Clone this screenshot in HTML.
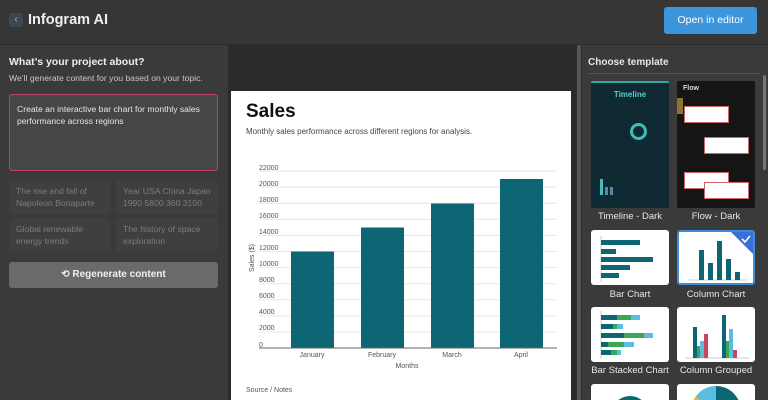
<!DOCTYPE html>
<html><head><meta charset="utf-8"><style>
*{margin:0;padding:0;box-sizing:border-box}
html,body{width:768px;height:400px;overflow:hidden}
body{background:#2b2b2b;font-family:"Liberation Sans",sans-serif;position:relative}
.a{position:absolute}
.hdr{left:0;top:0;width:768px;height:44px;background:#363636}
.left{left:0;top:45px;width:228px;height:355px;background:#3b3a3a}
.right{left:582px;top:45px;width:186px;height:355px;background:#3b3a3a}
.sug{background:#403f3f;border-radius:3px;color:#7d7c7c;font-size:8.6px;line-height:12px;padding:5px 7px;overflow:hidden}
.th{background:#fff;border-radius:3px;overflow:hidden}
.lbl{color:#e6e6e6;font-size:9.5px;text-align:center;width:86px}
</style></head><body>
<div class="a hdr"></div>
<div class="a" style="left:9px;top:13px;width:14px;height:14px;border-radius:3px;background:#3f4750;color:#9ac;font-size:10px;line-height:14px;text-align:center">‹</div>
<div class="a" style="left:28px;top:12px;color:#f0f0f0;font-size:14.5px;font-weight:bold">Infogram AI</div>
<div class="a" style="left:664px;top:7px;width:93px;height:27px;background:#3d95db;border-radius:3px;color:#fff;font-size:10.5px;line-height:27px;text-align:center">Open in editor</div>
<div class="a left"></div>
<div class="a" style="left:9px;top:56px;color:#eee;font-size:10.5px;font-weight:bold">What’s your project about?</div>
<div class="a" style="left:9px;top:73px;color:#c8c8c8;font-size:8.6px">We’ll generate content for you based on your topic.</div>
<div class="a" style="left:9px;top:94px;width:209px;height:77px;border:1.5px solid #c2406e;border-radius:3px;background:#474646;color:#e6e6e6;font-size:8.6px;line-height:12px;padding:8px 7px">Create an interactive bar chart for monthly sales performance across regions</div>
<div class="a sug" style="left:9px;top:180px;width:102px;height:34px">The rise and fall of Napoleon Bonaparte</div>
<div class="a sug" style="left:116px;top:180px;width:102px;height:34px">Year USA China Japan 1990 5800 360 3100</div>
<div class="a sug" style="left:9px;top:218px;width:102px;height:34px">Global renewable energy trends</div>
<div class="a sug" style="left:116px;top:218px;width:102px;height:34px">The history of space exploration</div>
<div class="a" style="left:9px;top:262px;width:209px;height:26px;background:#6a6a6a;border-radius:3px;color:#f0f0f0;font-size:10px;font-weight:bold;line-height:26px;text-align:center">⟲ Regenerate content</div>
<div class="a" style="left:231px;top:91px;width:340px;height:309px;background:#fff"></div>
<div class="a" style="left:246px;top:101px;color:#111;font-size:19px;font-weight:bold">Sales</div>
<div class="a" style="left:246px;top:127px;color:#444;font-size:8px">Monthly sales performance across different regions for analysis.</div>
<svg class="a" style="left:231px;top:91px" width="340" height="309">
<g stroke="#e6e6e6" stroke-width="1">
<line x1="28" x2="326" y1="80" y2="80"/><line x1="28" x2="326" y1="96" y2="96"/><line x1="28" x2="326" y1="112.2" y2="112.2"/><line x1="28" x2="326" y1="128.3" y2="128.3"/><line x1="28" x2="326" y1="144.4" y2="144.4"/><line x1="28" x2="326" y1="160.5" y2="160.5"/><line x1="28" x2="326" y1="176.6" y2="176.6"/><line x1="28" x2="326" y1="192.7" y2="192.7"/><line x1="28" x2="326" y1="208.8" y2="208.8"/><line x1="28" x2="326" y1="224.9" y2="224.9"/><line x1="28" x2="326" y1="241" y2="241"/></g>
<g fill="#0c6673"><rect x="60" y="160.5" width="43" height="96.5"/><rect x="130" y="136.5" width="43" height="120.5"/><rect x="200" y="112.5" width="43" height="144.5"/><rect x="269" y="88" width="43" height="169"/></g>
<line x1="28" x2="326" y1="257" y2="257" stroke="#666"/>
<g fill="#555" font-size="7" font-family="Liberation Sans">
<text x="28" y="79">22000</text><text x="28" y="95">20000</text><text x="28" y="111">18000</text><text x="28" y="127">16000</text><text x="28" y="143">14000</text><text x="28" y="159">12000</text><text x="28" y="175">10000</text><text x="28" y="191">8000</text><text x="28" y="207">6000</text><text x="28" y="223">4000</text><text x="28" y="239">2000</text><text x="28" y="256">0</text>
<text x="81" y="266" text-anchor="middle">January</text><text x="151" y="266" text-anchor="middle">February</text><text x="221" y="266" text-anchor="middle">March</text><text x="290" y="266" text-anchor="middle">April</text>
<text x="176" y="277" text-anchor="middle">Months</text>
<text transform="translate(23,167) rotate(-90)" text-anchor="middle">Sales ($)</text>
<text x="15" y="301">Source / Notes</text></g>
</svg>
<div class="a" style="left:577px;top:45px;width:4px;height:355px;background:#555"></div>
<div class="a right"></div>
<div class="a" style="left:588px;top:57px;color:#e6e6e6;font-size:10px;font-weight:bold">Choose template</div>
<div class="a" style="left:588px;top:73px;width:172px;height:1px;background:#555"></div>
<div class="a" style="left:763px;top:75px;width:3px;height:95px;background:#777;border-radius:2px"></div>
<div class="a" style="left:591px;top:81px;width:78px;height:127px;background:#0f2a33;border-top:2px solid #3aa;border-radius:2px;overflow:hidden"><div style="color:#5cc;font-size:8px;font-weight:bold;text-align:center;margin-top:7px">Timeline</div>
<div style="position:absolute;left:39px;top:40px;width:17px;height:17px;border:3px solid #4bb;border-radius:50%"></div>
<div style="position:absolute;left:9px;top:96px;width:3px;height:16px;background:#4bb"></div><div style="position:absolute;left:14px;top:104px;width:3px;height:8px;background:#58a"></div><div style="position:absolute;left:19px;top:104px;width:3px;height:8px;background:#58a"></div></div>
<div class="a" style="left:677px;top:81px;width:78px;height:127px;background:#161515;border-radius:2px;overflow:hidden"><div style="color:#ddd;font-size:7px;font-weight:bold;margin:4px 6px">Flow</div>
<div style="position:absolute;left:0;top:17px;width:6px;height:16px;background:#8a7333"></div>
<div style="position:absolute;left:7px;top:25px;width:45px;height:17px;background:#fff;border:1px solid #c66"></div>
<div style="position:absolute;left:27px;top:56px;width:45px;height:17px;background:#fff;border:1px solid #c66"></div>
<div style="position:absolute;left:7px;top:91px;width:45px;height:17px;background:#fff;border:1px solid #c66"></div>
<div style="position:absolute;left:27px;top:101px;width:45px;height:17px;background:#fff;border:1px solid #c66"></div></div>
<div class="a lbl" style="left:587px;top:211px">Timeline - Dark</div>
<div class="a lbl" style="left:673px;top:211px">Flow - Dark</div>
<div class="a th" style="left:591px;top:230px;width:78px;height:55px"><svg width="78" height="55"><line x1="10" y1="6" x2="10" y2="52" stroke="#ccc"/><g fill="#0c6673"><rect x="10" y="10" width="39" height="5"/><rect x="10" y="19" width="15" height="5"/><rect x="10" y="27" width="52" height="5"/><rect x="10" y="35" width="29" height="5"/><rect x="10" y="43" width="18" height="5"/></g></svg></div>
<div class="a th" style="left:677px;top:230px;width:78px;height:55px;border:2px solid #3d8bd9"><svg width="74" height="51" style="position:absolute;left:0;top:0"><line x1="10" y1="48" x2="68" y2="48" stroke="#ccc"/><g fill="#0c6673"><rect x="20" y="18" width="5" height="30"/><rect x="29" y="31" width="5" height="17"/><rect x="38" y="9" width="5" height="39"/><rect x="47" y="27" width="5" height="21"/><rect x="56" y="40" width="5" height="8"/></g><polygon points="52,0 74,0 74,22" fill="#3a6fd6"/><path d="M63 7 l3 3 l5 -6" stroke="#fff" stroke-width="1.6" fill="none"/></svg></div>
<div class="a lbl" style="left:587px;top:289px">Bar Chart</div>
<div class="a lbl" style="left:673px;top:289px">Column Chart</div>
<div class="a th" style="left:591px;top:307px;width:78px;height:55px"><svg width="78" height="55"><line x1="10" y1="4" x2="10" y2="52" stroke="#ccc"/><g fill="#0c6673"><rect x="10" y="8" width="16" height="5"/><rect x="10" y="17" width="12" height="5"/><rect x="10" y="26" width="23" height="5"/><rect x="10" y="35" width="7" height="5"/><rect x="10" y="43" width="10" height="5"/></g><g fill="#3aa65a"><rect x="26" y="8" width="14" height="5"/><rect x="22" y="17" width="4" height="5"/><rect x="33" y="26" width="20" height="5"/><rect x="17" y="35" width="16" height="5"/><rect x="20" y="43" width="6" height="5"/></g><g fill="#5bbde0"><rect x="40" y="8" width="9" height="5"/><rect x="26" y="17" width="6" height="5"/><rect x="53" y="26" width="9" height="5"/><rect x="33" y="35" width="10" height="5"/><rect x="26" y="43" width="4" height="5"/></g></svg></div>
<div class="a th" style="left:677px;top:307px;width:78px;height:55px"><svg width="78" height="55"><line x1="8" y1="51" x2="72" y2="51" stroke="#ccc"/><rect x="16" y="20" width="4" height="31" fill="#0c6673"/><rect x="20" y="39" width="3" height="12" fill="#3aa65a"/><rect x="23" y="34" width="4" height="17" fill="#5bbde0"/><rect x="27" y="27" width="4" height="24" fill="#c8475c"/><rect x="45" y="8" width="4" height="43" fill="#0c6673"/><rect x="49" y="34" width="3" height="17" fill="#3aa65a"/><rect x="52" y="22" width="4" height="29" fill="#5bbde0"/><rect x="56" y="43" width="4" height="8" fill="#c8475c"/></svg></div>
<div class="a lbl" style="left:587px;top:365px">Bar Stacked Chart</div>
<div class="a lbl" style="left:673px;top:365px">Column Grouped</div>
<div class="a th" style="left:591px;top:384px;width:78px;height:16px;border-radius:3px 3px 0 0"><div style="position:absolute;left:20px;top:12px;width:38px;height:38px;border-radius:50%;background:#0c6673"></div></div>
<div class="a th" style="left:677px;top:384px;width:78px;height:16px;border-radius:3px 3px 0 0"><div style="position:absolute;left:14px;top:2px;width:50px;height:50px;border-radius:50%;background:conic-gradient(#0c6673 0 40%,#c8475c 0 55%,#e07b39 0 70%,#f0b429 0 85%,#5bbde0 0 100%)"></div></div>
</body></html>
